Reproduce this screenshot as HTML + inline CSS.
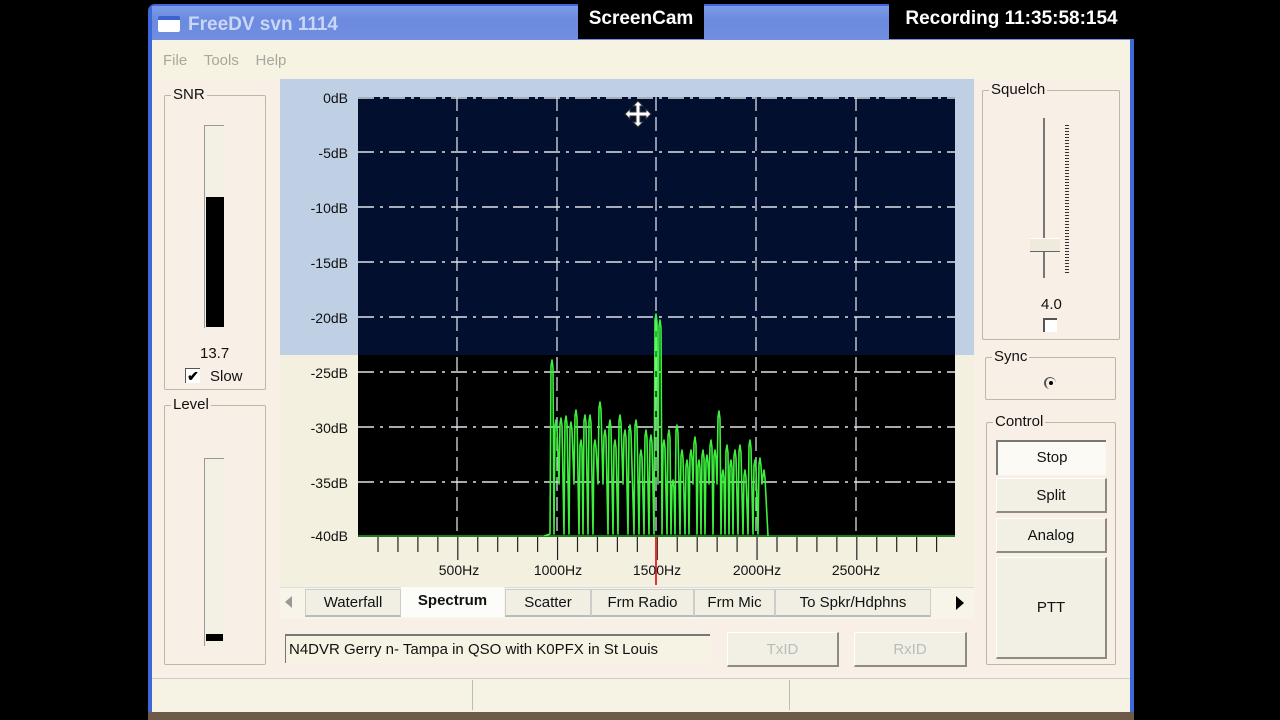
<!DOCTYPE html><html><head><meta charset="utf-8"><style>
*{margin:0;padding:0;box-sizing:border-box}
body{width:1280px;height:720px;background:#000;position:relative;overflow:hidden;font-family:"Liberation Sans",sans-serif}
.a{position:absolute}
.t{font-size:15px;color:#111}
.grp{position:absolute;border:1px solid #bdb7a8;border-radius:2px}
.grp span{position:absolute;top:-10px;left:6px;background:#f8f0e6;padding:0 2px;font-size:15px;color:#111}
.btn{position:absolute;background:#f2f0e4;border:1px solid #fff;border-right:2px solid #8e8c80;border-bottom:2px solid #8e8c80;font-size:15px;text-align:center;color:#111}
</style></head><body>
<div class="a" style="left:148px;top:4px;width:986px;height:710px;background:#3f68d8;border-radius:7px 7px 0 0"></div>
<div class="a" style="left:152px;top:6px;width:978px;height:34px;background:linear-gradient(#7d9be6,#6c8be0 40%,#6f8ee0)"></div>
<div class="a" style="left:158px;top:16px;width:22px;height:16px;background:#fff;border-top:4px solid #3d62d0;border-radius:2px"></div>
<div class="a" style="left:188px;top:14px;font-size:19px;font-weight:bold;color:#c9d6f6">FreeDV svn 1114</div>
<div class="a" style="left:152px;top:40px;width:978px;height:672px;background:#f8f0e6"></div>
<div class="a" style="left:152px;top:42px;width:978px;height:36px;background:#f6f3e2"></div>
<div class="a t" style="left:163px;top:52px;color:#a9a69c">File&nbsp;&nbsp;&nbsp;&nbsp;Tools&nbsp;&nbsp;&nbsp;&nbsp;Help</div>
<div class="a" style="left:280px;top:79px;width:694px;height:276px;background:#bfd0e5"></div>
<div class="a" style="left:280px;top:355px;width:694px;height:232px;background:#f4f0e0"></div>
<div class="a" style="left:358px;top:97px;width:597px;height:258px;background:#020f2e"></div>
<div class="a" style="left:358px;top:355px;width:597px;height:182px;background:#000"></div>
<svg class="a" style="left:0;top:0" width="1280" height="720">
<g stroke="#d8dde8" stroke-width="1.3" stroke-dasharray="14,6">
<line x1="457" y1="97" x2="457" y2="537"/><line x1="557" y1="97" x2="557" y2="537"/><line x1="656" y1="97" x2="656" y2="537"/><line x1="756" y1="97" x2="756" y2="537"/><line x1="856" y1="97" x2="856" y2="537"/>
</g>
<g stroke="#e0e2e8" stroke-width="1.5" stroke-dasharray="16,6,3,6">
<line x1="358" y1="98" x2="955" y2="98"/><line x1="358" y1="152" x2="955" y2="152"/><line x1="358" y1="207" x2="955" y2="207"/><line x1="358" y1="262" x2="955" y2="262"/><line x1="358" y1="317" x2="955" y2="317"/><line x1="358" y1="372" x2="955" y2="372"/><line x1="358" y1="427" x2="955" y2="427"/><line x1="358" y1="482" x2="955" y2="482"/>
</g>
<g id="ticks" stroke="#222" stroke-width="1.2"></g>
<line x1="656" y1="537" x2="656" y2="585" stroke="#e83030" stroke-width="2"/>
<polyline id="sp" fill="none" stroke="#3df03d" stroke-width="1.6" stroke-linejoin="round" points=""/>
<line x1="358" y1="536" x2="955" y2="536" stroke="#3df03d" stroke-width="1"/>
<g font-family="Liberation Sans" font-size="14" fill="#111" text-anchor="end">
<text x="348" y="103">0dB</text><text x="348" y="158">-5dB</text><text x="348" y="213">-10dB</text><text x="348" y="268">-15dB</text><text x="348" y="323">-20dB</text><text x="348" y="378">-25dB</text><text x="348" y="433">-30dB</text><text x="348" y="488">-35dB</text><text x="348" y="541">-40dB</text>
</g>
<g font-family="Liberation Sans" font-size="14" fill="#111" text-anchor="middle">
<text x="459" y="575">500Hz</text><text x="558" y="575">1000Hz</text><text x="657" y="575">1500Hz</text><text x="757" y="575">2000Hz</text><text x="856" y="575">2500Hz</text>
</g>
</svg>
<div class="a" style="left:280px;top:587px;width:694px;height:32px;background:#f7f5ea;border-top:1px solid #ddd"></div>
<div class="a" style="left:285px;top:596px;width:0;height:0;border:6px solid transparent;border-right:7px solid #999;border-left:0"></div>
<div class="a" style="left:956px;top:596px;width:0;height:0;border:7px solid transparent;border-left:8px solid #000;border-right:0"></div>
<div class="a t" style="left:305px;top:589px;width:96px;height:28px;border:1px solid #ccc;border-bottom:2px solid #bbb;text-align:center;line-height:26px;background:#f1efe4">Waterfall</div>
<div class="a t" style="left:401px;top:587px;width:103px;height:30px;text-align:center;line-height:28px;background:#fcfcf8;font-weight:bold">Spectrum</div>
<div class="a t" style="left:505px;top:589px;width:86px;height:28px;border:1px solid #ccc;border-bottom:2px solid #bbb;text-align:center;line-height:26px;background:#f1efe4">Scatter</div>
<div class="a t" style="left:591px;top:589px;width:103px;height:28px;border:1px solid #ccc;border-bottom:2px solid #bbb;text-align:center;line-height:26px;background:#f1efe4">Frm Radio</div>
<div class="a t" style="left:694px;top:589px;width:81px;height:28px;border:1px solid #ccc;border-bottom:2px solid #bbb;text-align:center;line-height:26px;background:#f1efe4">Frm Mic</div>
<div class="a t" style="left:775px;top:589px;width:156px;height:28px;border:1px solid #ccc;border-bottom:2px solid #bbb;text-align:center;line-height:26px;background:#f1efe4">To Spkr/Hdphns</div>
<div class="a t" style="left:285px;top:634px;width:425px;height:29px;background:#f6f3e4;border-top:2px solid #777;border-left:1px solid #777;line-height:27px;padding-left:3px">N4DVR Gerry n- Tampa in QSO with K0PFX in St Louis</div>
<div class="btn" style="left:727px;top:632px;width:112px;height:35px;line-height:33px;color:#bbb">TxID</div>
<div class="btn" style="left:854px;top:632px;width:113px;height:35px;line-height:33px;color:#bbb">RxID</div>
<div class="a" style="left:152px;top:678px;width:978px;height:34px;background:#f6f3e4;border-top:1px solid #ccc"></div>
<div class="a" style="left:472px;top:680px;width:1px;height:30px;background:#bbb"></div>
<div class="a" style="left:789px;top:680px;width:1px;height:30px;background:#bbb"></div>
<div class="a" style="left:148px;top:712px;width:986px;height:8px;background:#6d5a48"></div>
<div class="grp" style="left:164px;top:95px;width:102px;height:295px"><span>SNR</span></div>
<div class="a" style="left:204px;top:125px;width:20px;height:203px;background:#f3f1e4;border-left:1px solid #999;border-top:1px solid #999"></div>
<div class="a" style="left:206px;top:197px;width:18px;height:130px;background:#000"></div>
<div class="a t" style="left:200px;top:345px">13.7</div>
<div class="a" style="left:185px;top:368px;width:15px;height:15px;border-left:1px solid #555;border-top:1px solid #555;background:#fff;font-size:14px;line-height:14px;font-weight:bold;text-align:center">✔</div>
<div class="a t" style="left:210px;top:368px">Slow</div>
<div class="grp" style="left:164px;top:405px;width:102px;height:260px"><span>Level</span></div>
<div class="a" style="left:204px;top:458px;width:20px;height:188px;background:#f3f1e4;border-left:1px solid #999;border-top:1px solid #999"></div>
<div class="a" style="left:206px;top:634px;width:17px;height:7px;background:#000"></div>
<div class="grp" style="left:982px;top:90px;width:138px;height:250px"><span>Squelch</span></div>
<div class="a" style="left:1043px;top:118px;width:2px;height:160px;background:#777"></div>
<div class="a" style="left:1030px;top:238px;width:30px;height:14px;background:#eeeadc;border-top:1px solid #fff;border-bottom:1px solid #666"></div>
<div class="a" style="left:1065px;top:125px;width:4px;height:148px;background:repeating-linear-gradient(#333 0 1px,transparent 1px 3px)"></div>
<div class="a t" style="left:1041px;top:296px">4.0</div>
<div class="a" style="left:1043px;top:318px;width:14px;height:14px;border-left:2px solid #555;border-top:2px solid #555;background:#fff"></div>
<div class="grp" style="left:985px;top:357px;width:131px;height:43px"><span>Sync</span></div>
<div class="a" style="left:1044px;top:377px;width:12px;height:12px;border-radius:50%;border-left:2px solid #555;border-top:1px solid #555"><div style="margin:3px;width:4px;height:4px;border-radius:50%;background:#000"></div></div>
<div class="grp" style="left:986px;top:422px;width:130px;height:243px"><span>Control</span></div>
<div class="a t" style="left:996px;top:440px;width:110px;height:35px;background:#fbfaf4;border-top:2px solid #777;border-left:2px solid #777;text-align:center;line-height:31px">Stop</div>
<div class="btn" style="left:996px;top:478px;width:111px;height:35px;line-height:33px">Split</div>
<div class="btn" style="left:996px;top:518px;width:111px;height:35px;line-height:33px">Analog</div>
<div class="btn" style="left:996px;top:557px;width:111px;height:102px;line-height:100px">PTT</div>
<div class="a" style="left:578px;top:0;width:126px;height:39px;background:#000;color:#fff;font-weight:bold;font-size:19px;text-align:center;line-height:38px">ScreenCam</div>
<div class="a" style="left:889px;top:0;width:245px;height:39px;background:#000;color:#fff;font-weight:bold;font-size:19px;text-align:center;line-height:38px">Recording 11:35:58:154</div>
<svg class="a" style="left:624px;top:100px" width="28" height="28"><g stroke="#333" fill="#fff" stroke-width="1"><path d="M14 1 L19 6 H16 V12 H22 V9 L27 14 L22 19 V16 H16 V22 H19 L14 27 L9 22 H12 V16 H6 V19 L1 14 L6 9 V12 H12 V6 H9 Z"/></g></svg>
<script>
var t=document.getElementById('ticks'),s='';
for(var x=378;x<955;x+=19.95){var big=[457,557,656,756,856].some(function(v){return Math.abs(v-x)<5});s+='<line x1="'+x+'" y1="537" x2="'+x+'" y2="'+(big?560:552)+'"/>';}
t.innerHTML=s;
var pk=[[552,360],[556,420],[561,345],[566,416],[571,422],[576,410],[581,440],[585,415],[590,415],[595,440],[600,402],[605,430],[610,420],[615,440],[620,415],[625,430],[630,425],[636,420],[641,450],[646,430],[651,435],[656,314],[660,320],[664,440],[669,430],[673,480],[677,425],[682,450],[687,460],[691,450],[695,437],[699,460],[703,450],[707,455],[711,440],[715,450],[719,411],[723,470],[727,445],[731,460],[735,450],[740,445],[745,470],[750,440],[755,460],[760,458],[764,470]];
pk[2][1]=418;
var p='544,536 ';var r=7;
pk.forEach(function(q,i){r=(r*37+11)%97;var d=534-(r%3==0?50:0);p+=(q[0]-2)+','+d+' '+(q[0]-1)+','+(q[1]+6)+' '+q[0]+','+q[1]+' '+(q[0]+1)+','+(q[1]+8)+' ';});
p+='768,536';
document.getElementById('sp').setAttribute('points',p);
</script>
</body></html>
